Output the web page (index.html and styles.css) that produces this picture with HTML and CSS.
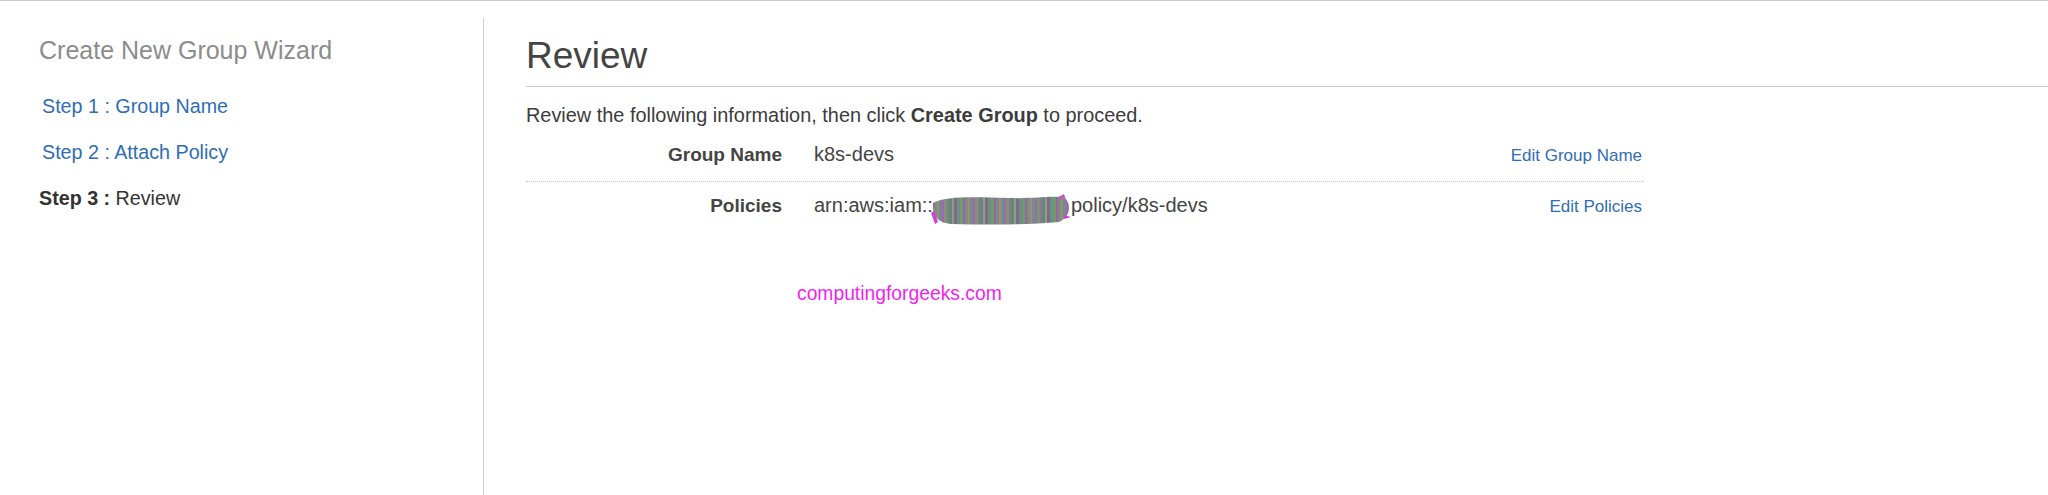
FILE: index.html
```html
<!DOCTYPE html>
<html>
<head>
<meta charset="utf-8">
<title>Create New Group Wizard</title>
<link rel="stylesheet" href="styles.css">
</head>
<body>
<div class="page">
  <aside class="sidebar">
    <div class="wizard-title">Create New Group Wizard</div>
    <ul class="steps">
      <li><a class="step-link" href="#">Step 1 : Group Name</a></li>
      <li><a class="step-link" href="#">Step 2 : Attach Policy</a></li>
      <li class="step-current"><b>Step 3 :</b> Review</li>
    </ul>
  </aside>
  <main class="main">
    <h1 class="heading">Review</h1>
    <p class="intro">Review the following information, then click <b>Create Group</b> to proceed.</p>
    <div class="review-table">
      <div class="row">
        <div class="label">Group Name</div>
        <div class="value">k8s-devs</div>
        <a class="edit" href="#">Edit Group Name</a>
      </div>
      <div class="row">
        <div class="label">Policies</div>
        <div class="value">arn:aws:iam::<svg class="blob" width="142" height="32" viewBox="0 0 142 32" aria-hidden="true">
            <defs>
              <pattern id="stripes" width="31" height="32" patternUnits="userSpaceOnUse">
                <rect x="0" y="0" width="3" height="32" fill="#6f9a6c"/>
                <rect x="3" y="0" width="2" height="32" fill="#9566a0"/>
                <rect x="5" y="0" width="3" height="32" fill="#7e8a86"/>
                <rect x="8" y="0" width="2" height="32" fill="#a88a6c"/>
                <rect x="10" y="0" width="3" height="32" fill="#6a8f9a"/>
                <rect x="13" y="0" width="2" height="32" fill="#b060b0"/>
                <rect x="15" y="0" width="3" height="32" fill="#7a9870"/>
                <rect x="18" y="0" width="2" height="32" fill="#8a7896"/>
                <rect x="20" y="0" width="3" height="32" fill="#5f8a7a"/>
                <rect x="23" y="0" width="2" height="32" fill="#9a9a7a"/>
                <rect x="25" y="0" width="3" height="32" fill="#7b6a92"/>
                <rect x="28" y="0" width="3" height="32" fill="#6f8f80"/>
              </pattern>
              <clipPath id="blobclip">
                <path d="M4,9 C15,2 45,3 80,4 C108,5 122,1 136,4 C143,11 141,23 130,28 C100,31 60,31 22,30 C8,29 3,21 4,9 Z"/>
              </clipPath>
            </defs>
            <rect x="0" y="0" width="142" height="32" fill="url(#stripes)" clip-path="url(#blobclip)"/>
            <path d="M2,19 L6,30 L9,28 L5,17 Z" fill="#d040d8"/>
            <path d="M129,3 L135,0 L137,6 Z" fill="#c060c8"/>
            <path d="M135,21 L142,23 L135,25 Z" fill="#d040d8"/>
          </svg>policy/k8s-devs</div>
        <a class="edit" href="#">Edit Policies</a>
      </div>
    </div>
    <div class="watermark">computingforgeeks.com</div>
  </main>
</div>
</body>
</html>
```

FILE: styles.css
```css
html, body {
  margin: 0;
  padding: 0;
  background: #ffffff;
}

body {
  font-family: "Liberation Sans", Arial, Helvetica, sans-serif;
  color: #444444;
  border-top: 1px solid #cccccc;
  height: 494px;
  overflow: hidden;
}

.page {
  display: flex;
  margin-top: 17px;
  height: 477px;
}

.sidebar {
  width: 444px;
  padding: 17px 0 0 39px;
  border-right: 1px solid #cfcfcf;
  flex: none;
}

.wizard-title {
  font-size: 25px;
  line-height: 30px;
  color: #8c8c8c;
}

.steps {
  list-style: none;
  margin: 29px 0 0 0;
  padding: 0;
  display: flex;
  flex-direction: column;
  gap: 22px;
}

.steps li {
  font-size: 19.7px;
  line-height: 24px;
}

.step-link {
  color: #2f6db5;
  text-decoration: none;
  padding-left: 3px;
}

.step-current {
  color: #333333;
}

.main {
  flex: 1;
  padding: 17px 0 0 42px;
}

.heading {
  margin: 0;
  font-size: 37px;
  line-height: 42px;
  font-weight: normal;
  color: #444444;
  padding-bottom: 9px;
  border-bottom: 1px solid #cccccc;
}

.intro {
  margin: 17px 0 0 0;
  font-size: 19.9px;
  line-height: 22px;
  color: #3c3c3c;
}

.review-table {
  width: 1118px;
  margin-top: 5px;
}

.row {
  display: grid;
  grid-template-columns: 256px 1fr auto;
  column-gap: 32px;
  align-items: baseline;
  padding: 11px 2px 13px 0;
  font-size: 19px;
  line-height: 24px;
}

.row + .row {
  border-top: 1px dotted #c4c4c4;
}

.label {
  text-align: right;
  font-weight: bold;
  color: #444444;
}

.value {
  font-size: 20px;
  color: #444444;
  white-space: nowrap;
}

.blob {
  vertical-align: -5px;
  margin: -9px 0 -9px -4px;
}

.edit {
  font-size: 17px;
  color: #2f6db5;
  text-decoration: none;
}

.watermark {
  margin: 50px 0 0 271px;
  font-size: 19.3px;
  line-height: 24px;
  color: #f21ef2;
}
```
